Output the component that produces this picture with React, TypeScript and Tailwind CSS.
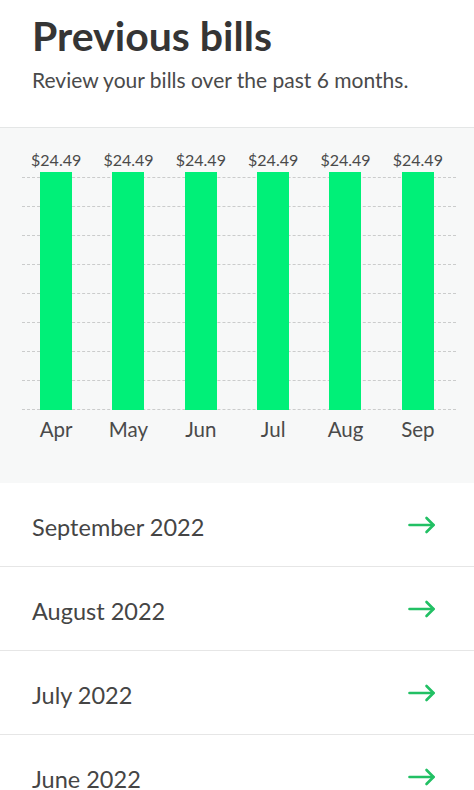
const months = ['Apr', 'May', 'Jun', 'Jul', 'Aug', 'Sep']
const bills = ['September 2022', 'August 2022', 'July 2022', 'June 2022']

function Arrow() {
  return (
    <svg width="28" height="18" viewBox="0 0 28 18" fill="none" stroke="#22c064" strokeWidth="2.6" strokeLinecap="round" strokeLinejoin="round">
      <path d="M1.5 9h24" />
      <path d="M18.5 2l7 7-7 7" />
    </svg>
  )
}

export default function App() {
  return (
    <div className="min-h-screen bg-white text-[#3d3d3d] font-['Lato','Liberation_Sans',sans-serif] overflow-hidden">
      {/* Header */}
      <div className="px-8 pt-[12px] pb-[34px]">
        <h1 className="text-[41px] font-bold leading-[48px] text-[#353535]">Previous bills</h1>
        <p className="text-[21px] leading-[26px] mt-[7px] text-[#4a4a4a]">Review your bills over the past 6 months.</p>
      </div>

      {/* Chart */}
      <div className="border-t border-[#e4e6e6] bg-[#f7f8f8] h-[356px] pt-[23px] px-[20px]">
        <div className="relative">
          <div className="absolute left-[2px] right-[-2px] top-[26px] h-[233px] flex flex-col justify-between">
            {Array.from({ length: 9 }).map((_, i) => (
              <div key={i} className="border-t border-dashed border-[#cbcccc]" />
            ))}
          </div>
          <div className="relative grid grid-cols-6">
            {months.map((m) => (
              <div key={m} className="flex flex-col items-center">
                <span className="text-[16px] leading-[18px] text-[#4a4a4a]">$24.49</span>
                <div className="mt-[3px] w-[32px] h-[238px] bg-[#00f078]" />
                <span className="mt-[6px] text-[20.5px] leading-[26px] text-[#4a4a4a]">{m}</span>
              </div>
            ))}
          </div>
        </div>
      </div>

      {/* Bill list */}
      <div>
        {bills.map((b) => (
          <div key={b} className="h-[84px] flex items-center justify-between pl-8 pr-[38px] border-b border-[#e6e6e6]">
            <span className="mt-[6px] text-[23.5px] text-[#454545]">{b}</span>
            <Arrow />
          </div>
        ))}
      </div>
    </div>
  )
}
